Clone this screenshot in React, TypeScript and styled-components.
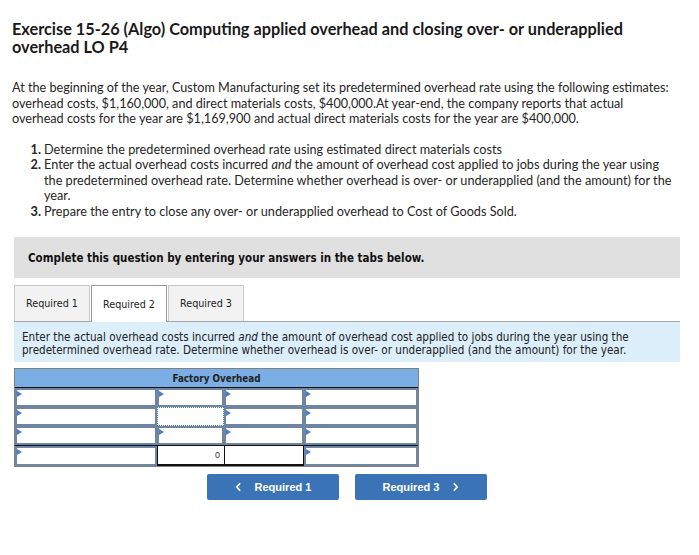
import * as React from "react";
import styled, { createGlobalStyle } from "styled-components";

const GlobalStyle = createGlobalStyle`
  html, body {
    margin: 0;
    padding: 0;
    background: #fff;
  }
  body {
    font-family: "Lato", "Open Sans", sans-serif;
    color: #222;
  }
`;

type CellKind = "input" | "focus" | "total" | "zero";

// rows of the T-account, left to right
const rows: CellKind[][] = [
  ["input", "input", "input", "input"],
  ["input", "focus", "input", "input"],
  ["input", "input", "input", "input"],
  ["input", "zero", "total", "input"],
];

export default function App() {
  return (
    <Page>
      <GlobalStyle />
      <Title>
        Exercise 15-26 (Algo) Computing applied overhead and closing over- or
        underapplied overhead LO P4
      </Title>

      <Intro>
        At the beginning of the year, Custom Manufacturing set its predetermined
        overhead rate using the following estimates: overhead costs, $1,160,000,
        and direct materials costs, $400,000.At year-end, the company reports
        that actual overhead costs for the year are $1,169,900 and actual direct
        materials costs for the year are $400,000.
      </Intro>

      <Steps>
        <li>Determine the predetermined overhead rate using estimated direct materials costs</li>
        <li>
          Enter the actual overhead costs incurred <em>and</em> the amount of overhead
          cost applied to jobs during the year using the predetermined overhead
          rate. Determine whether overhead is over- or underapplied (and the
          amount) for the year.
        </li>
        <li>Prepare the entry to close any over- or underapplied overhead to Cost of Goods Sold.</li>
      </Steps>

      <Banner>Complete this question by entering your answers in the tabs below.</Banner>

      <Tabs>
        <Tab>Required 1</Tab>
        <Tab $active>Required 2</Tab>
        <Tab>Required 3</Tab>
      </Tabs>

      <Instructions>
        Enter the actual overhead costs incurred <em>and</em> the amount of overhead
        cost applied to jobs during the year using the predetermined overhead
        rate. Determine whether overhead is over- or underapplied (and the
        amount) for the year.
      </Instructions>

      <Account>
        <AccountHead>Factory Overhead</AccountHead>
        {rows.map((row, r) => (
          <AccountRow key={r} $last={r === rows.length - 1}>
            {row.map((kind, c) =>
              kind === "zero" || kind === "total" ? (
                <TotalCell key={c} $left={c === 1}>
                  {kind === "zero" ? "0" : ""}
                </TotalCell>
              ) : (
                <InputCell key={c} $focus={kind === "focus"}>
                  {kind !== "focus" && <Marker />}
                </InputCell>
              )
            )}
          </AccountRow>
        ))}
      </Account>

      <Nav>
        <NavButton>
          <Chevron viewBox="0 0 8 12">
            <path d="M6 1.5 L2 6 L6 10.5" />
          </Chevron>
          Required 1
        </NavButton>
        <NavButton>
          Required 3
          <Chevron viewBox="0 0 8 12">
            <path d="M2 1.5 L6 6 L2 10.5" />
          </Chevron>
        </NavButton>
      </Nav>
    </Page>
  );
}

const Page = styled.main`
  padding: 20px 19px 40px 12px;
`;

const Title = styled.h1`
  margin: 0;
  font-size: 16.3px;
  font-weight: 700;
  line-height: 18px;
  color: #1a1a1a;
  max-width: 640px;
`;

const Intro = styled.p`
  margin: 24px 8px 0 0;
  font-size: 12.65px;
  line-height: 15.5px;
  color: #262626;
`;

const Steps = styled.ol`
  margin: 15px 4px 0 0;
  padding-left: 32px;
  font-size: 12.7px;
  line-height: 15.5px;
  color: #262626;

  li::marker {
    font-weight: 700;
  }
`;

const Banner = styled.div`
  margin: 18px 0 0 2px;
  height: 41px;
  background: #e0e0e0;
  display: flex;
  align-items: center;
  padding-left: 14px;
  font-family: "DejaVu Sans Condensed", "DejaVu Sans", sans-serif;
  font-size: 11.5px;
  font-weight: 700;
  color: #111;
`;

const Tabs = styled.div`
  margin: 6px 0 0 2px;
  display: flex;
  gap: 1px;
  border-bottom: 1px solid #a5a5a5;
  height: 37px;
`;

const Tab = styled.div<{ $active?: boolean }>`
  width: 76px;
  height: ${(p) => (p.$active ? "37px" : "36px")};
  box-sizing: border-box;
  display: flex;
  align-items: center;
  justify-content: center;
  font-family: "DejaVu Sans Condensed", "DejaVu Sans", sans-serif;
  font-size: 10.7px;
  color: #222;
  background: ${(p) => (p.$active ? "#fff" : "#f2f2f2")};
  border: 1px solid ${(p) => (p.$active ? "#9a9a9a" : "#c9c9c9")};
  border-bottom: none;
  margin-bottom: ${(p) => (p.$active ? "-1px" : "0")};
  align-self: flex-end;
  position: relative;
`;

const Instructions = styled.div`
  margin: 0 0 0 2px;
  background: #dbeefa;
  padding: 9px 8px 0;
  height: 31px;
  font-family: "DejaVu Sans Condensed", "DejaVu Sans", sans-serif;
  font-size: 11.6px;
  line-height: 13px;
  color: #222;
`;

const Account = styled.div`
  margin: 6px 0 0 2px;
  width: 405px;
  border: 1px solid #808080;
  box-sizing: border-box;
  background: #7f92a8;
`;

const AccountHead = styled.div`
  height: 18px;
  background: #7aaee4;
  border-bottom: 1px solid #111;
  display: flex;
  align-items: center;
  justify-content: center;
  font-family: "DejaVu Sans Condensed", "DejaVu Sans", sans-serif;
  font-size: 9.8px;
  font-weight: 700;
  color: #222;
`;

const AccountRow = styled.div<{ $last?: boolean }>`
  display: grid;
  grid-template-columns: 142px 67px 80px 114px;
  height: ${(p) => (p.$last ? "20px" : "19px")};
  border-top: ${(p) => (p.$last ? "1px solid #111" : "none")};
  background: #fff;
`;

const InputCell = styled.div<{ $focus?: boolean }>`
  position: relative;
  box-sizing: border-box;
  border-style: ${(p) => (p.$focus ? "dotted" : "solid")};
  border-color: ${(p) => (p.$focus ? "#3f74c0" : "#6f86a3")};
  border-width: ${(p) => (p.$focus ? "1px" : "2px")};
  background: #fff;
`;

const Marker = styled.span`
  position: absolute;
  top: 1px;
  left: 0;
  width: 0;
  height: 0;
  border-top: 3px solid transparent;
  border-bottom: 3px solid transparent;
  border-left: 5px solid #4a7fc8;
`;

const TotalCell = styled.div<{ $left?: boolean }>`
  box-sizing: border-box;
  background: #fff;
  border-left: 1px solid #111;
  border-right: ${(p) => (p.$left ? "none" : "1px solid #111")};
  border-bottom: 2px solid #111;
  display: flex;
  align-items: center;
  justify-content: flex-end;
  padding-right: 4px;
  font-family: "Liberation Sans", Arial, sans-serif;
  font-size: 9px;
  color: #333;
`;

const Nav = styled.div`
  margin: 7px 0 0 195px;
  display: flex;
  gap: 16px;
`;

const NavButton = styled.button`
  width: 132px;
  height: 26px;
  border: none;
  border-radius: 2px;
  background: #3b74b6;
  color: #fff;
  font-family: "Liberation Sans", Arial, sans-serif;
  font-size: 11px;
  font-weight: 700;
  display: flex;
  align-items: center;
  justify-content: center;
  gap: 13px;
  cursor: pointer;
`;

const Chevron = styled.svg`
  width: 7px;
  height: 10px;
  fill: none;
  stroke: #fff;
  stroke-width: 2;
`;
